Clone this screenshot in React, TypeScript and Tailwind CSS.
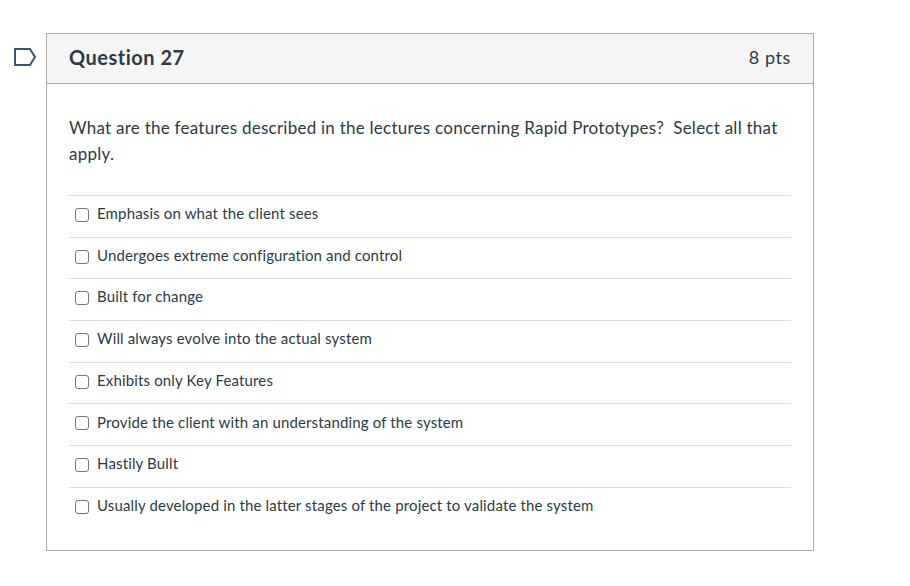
import React from 'react'

const answers = [
  'Emphasis on what the client sees',
  'Undergoes extreme configuration and control',
  'Built for change',
  'Will always evolve into the actual system',
  'Exhibits only Key Features',
  'Provide the client with an understanding of the system',
  'Hastily Bullt',
  'Usually developed in the latter stages of the project to validate the system',
]

function Flag() {
  return (
    <svg width="24" height="20" viewBox="0 0 24 20" fill="none">
      <path d="M2 2 H17 L22 10 L17 18 H2 Z" stroke="#3f5366" strokeWidth="2" strokeLinejoin="miter" />
    </svg>
  )
}

export default function App() {
  return (
    <div className="min-h-[586px] w-[910px] bg-white font-['Lato',sans-serif] text-[#2d3b45]">
      <div className="flex pt-[33px]">
        <div className="w-[46px] pl-[13px] pt-[14px]">
          <Flag />
        </div>
        <div className="w-[768px] border border-[#aaaaaa]">
          <div className="flex h-[50px] items-center justify-between border-b border-[#aaaaaa] bg-[#f5f5f5] pl-[22px] pr-[22px]">
            <h2 className="-mt-[4px] text-[20px] font-bold tracking-[0.5px]">Question 27</h2>
            <span className="-mt-[3px] text-[18px] tracking-[0.6px]">8 pts</span>
          </div>
          <div className="px-[22px] pt-[31px] pb-[21px]">
            <p className="text-[17px] leading-[26px] tracking-[0.25px]">
              What are the features described in the lectures concerning Rapid Prototypes?&nbsp; Select all that apply.
            </p>
            <div className="mt-[28px]">
              {answers.map((a) => (
                <label
                  key={a}
                  className="flex h-[41.7px] items-center gap-[8px] border-t border-[#dddddd] pl-[6px] text-[15px] tracking-[0.15px]"
                >
                  <span className="-mt-[3px] h-[14px] w-[14px] rounded-[3px] border border-[#777777] bg-white" />
                  <span className="-mt-[6px]">{a}</span>
                </label>
              ))}
            </div>
          </div>
        </div>
      </div>
    </div>
  )
}
